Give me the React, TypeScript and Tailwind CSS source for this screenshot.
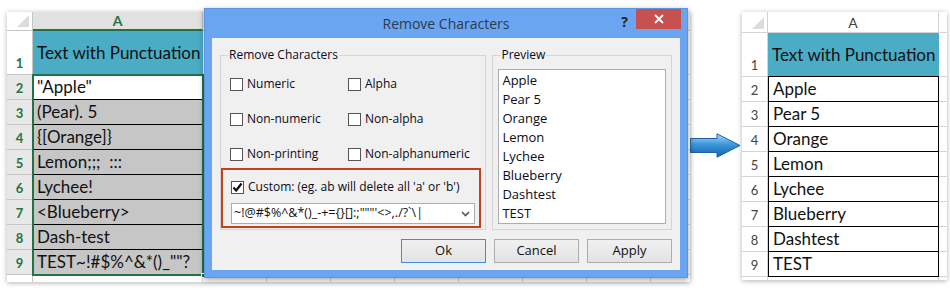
import React from 'react';

const leftRows = ['"Apple"', '(Pear). 5', '{[Orange]}', 'Lemon;;;  :::', 'Lychee!', '<Blueberry>', 'Dash-test', 'TEST~!#$%^&*()_""?'];
const cleanRows = ['Apple', 'Pear 5', 'Orange', 'Lemon', 'Lychee', 'Blueberry', 'Dashtest', 'TEST'];
const extraCols = [0, 1, 2, 3, 4, 5, 6];

function Corner() {
  return (
    <svg width="12" height="12" viewBox="0 0 12 12" className="absolute right-[3px] bottom-[3px]">
      <path d="M12 0 L12 12 L0 12 Z" fill="#dcdcdc" />
    </svg>
  );
}

function EmptyCells() {
  return (
    <>
      {extraCols.map((c) => (
        <div key={c} className="w-[64px] shrink-0 border-r border-b border-[#dadada]" />
      ))}
      <div className="flex-1 border-b border-[#dadada]" />
    </>
  );
}

function SourceSheet() {
  return (
    <div className="relative w-[683px] h-[270px] shrink-0 bg-white shadow-[0_1px_5px_rgba(0,0,0,0.3)] overflow-hidden font-['Lato',sans-serif]">
      <div className="flex h-[19px]">
        <div className="relative w-[26px] shrink-0 border-r border-b border-[#c6c6c6] bg-white">
          <Corner />
        </div>
        <div className="w-[170px] shrink-0 bg-[#e1e1e1] border-b-2 border-[#217346] border-r border-r-[#c6c6c6] flex items-center justify-center text-[14px] font-bold text-[#217346]">
          A
        </div>
        {extraCols.map((c) => (
          <div key={c} className="w-[64px] shrink-0 border-r border-b border-[#c6c6c6] bg-[#f3f3f3]" />
        ))}
        <div className="flex-1 border-b border-[#c6c6c6] bg-[#f3f3f3]" />
      </div>
      <div className="flex h-[44px]">
        <div className="w-[26px] shrink-0 border-r border-b border-[#c6c6c6] bg-white flex items-end justify-center pb-[1px] text-[13px] text-[#217346] font-bold">
          1
        </div>
        <div className="w-[170px] shrink-0 bg-[#4aacc5] border-b border-black flex items-center pl-[4px] text-[17px] text-[#111] whitespace-nowrap overflow-hidden">
          Text with Punctuation
        </div>
        <EmptyCells />
      </div>
      {leftRows.map((r, i) => (
        <div key={i} className="flex h-[25px]">
          <div className="w-[26px] shrink-0 border-r border-b border-[#c6c6c6] bg-[#e8e8e8] flex items-end justify-center pb-[1px] text-[13px] text-[#217346] font-bold">
            {i + 2}
          </div>
          <div
            className={`w-[170px] shrink-0 border-b border-r border-black flex items-center pl-[4px] text-[17px] text-[#111] whitespace-pre overflow-hidden ${
              i === 0 ? 'bg-white' : 'bg-[#c6c6c6]'
            }`}
          >
            {r}
          </div>
          <EmptyCells />
        </div>
      ))}
      <div className="flex h-[25px]">
        <div className="w-[26px] shrink-0 border-r border-[#c6c6c6] bg-white" />
        <div className="w-[170px] shrink-0 border-r border-[#dadada]" />
        {extraCols.map((c) => (
          <div key={c} className="w-[64px] shrink-0 border-r border-[#dadada]" />
        ))}
      </div>
      {/* selection outline A2:A9 */}
      <div className="absolute left-[25px] top-[62px] w-[172px] h-[202px] border-2 border-[#217346]" />
      <div className="absolute left-[194px] top-[261px] w-[5px] h-[5px] bg-[#217346] border border-white" />
    </div>
  );
}

function ResultSheet() {
  return (
    <div className="w-[205px] h-[268px] shrink-0 bg-white shadow-[0_1px_5px_rgba(0,0,0,0.3)] overflow-hidden font-['Lato',sans-serif]">
      <div className="flex h-[21px]">
        <div className="relative w-[26px] shrink-0 border-r border-b border-[#d4d4d4]">
          <Corner />
        </div>
        <div className="w-[171px] shrink-0 border-r border-b border-[#d4d4d4] flex items-center justify-center text-[14px] text-[#444]">
          A
        </div>
        <div className="flex-1 border-b border-[#d4d4d4]" />
      </div>
      <div className="flex h-[44px]">
        <div className="w-[26px] shrink-0 border-r border-b border-[#d4d4d4] flex items-end justify-center pb-[1px] text-[13px] text-[#444]">
          1
        </div>
        <div className="w-[171px] shrink-0 bg-[#4aacc5] border-b border-black flex items-center pl-[4px] text-[17px] text-[#111] whitespace-nowrap overflow-hidden">
          Text with Punctuation
        </div>
        <div className="flex-1 border-b border-[#d4d4d4]" />
      </div>
      {cleanRows.map((r, i) => (
        <div key={r} className="flex h-[25px]">
          <div className="w-[26px] shrink-0 border-r border-b border-[#d4d4d4] flex items-end justify-center pb-[1px] text-[13px] text-[#444]">
            {i + 2}
          </div>
          <div className="w-[171px] shrink-0 border-x border-b border-black flex items-center pl-[4px] text-[17px] text-[#111]">
            {r}
          </div>
          <div className="flex-1 border-b border-[#d4d4d4]" />
        </div>
      ))}
      <div className="flex h-[3px]">
        <div className="w-[26px] shrink-0 border-r border-[#d4d4d4]" />
        <div className="w-[171px] shrink-0 border-r border-[#d4d4d4]" />
      </div>
    </div>
  );
}

function Check({ checked }: { checked?: boolean }) {
  return (
    <div className="w-[13px] h-[13px] shrink-0 border border-[#555] bg-white flex items-center justify-center">
      {checked && (
        <svg width="11" height="11" viewBox="0 0 11 11">
          <path d="M1.5 5.5 L4.2 8.5 L9.5 1.5" fill="none" stroke="#111" strokeWidth="2.2" />
        </svg>
      )}
    </div>
  );
}

function Option({ label, checked }: { label: string; checked?: boolean }) {
  return (
    <div className="flex items-center gap-[4px] h-[20px]">
      <Check checked={checked} />
      <span className="text-[12px] text-[#0b0b20] whitespace-nowrap">{label}</span>
    </div>
  );
}

function Group({ title, className, children }: { title: string; className: string; children: React.ReactNode }) {
  return (
    <div className={`relative border border-[#d5d5d5] ${className}`}>
      <span className="absolute left-[7px] -top-[9px] bg-[#f0f0f0] px-[1px] text-[12px] leading-[16px] text-[#0b0b20]">{title}</span>
      {children}
    </div>
  );
}

function Button({ label, focus }: { label: string; focus?: boolean }) {
  return (
    <div
      className={`w-[85px] h-[24px] flex items-center justify-center text-[13px] text-[#111] bg-gradient-to-b from-[#f0f0f0] to-[#e3e3e3] border ${
        focus ? 'border-[#3c8ee0]' : 'border-[#adadad]'
      }`}
    >
      {label}
    </div>
  );
}

function Dialog() {
  return (
    <div className="absolute left-[204px] top-[8px] w-[484px] h-[270px] bg-[#6aa5f1] border border-[#5b95e2] flex flex-col px-[7px] pb-[7px] shadow-[0_2px_6px_rgba(0,0,0,0.35)] font-['Open_Sans',sans-serif]">
      <div className="h-[29px] grid grid-cols-[1fr_auto_1fr] items-start">
        <div />
        <div className="h-[29px] flex items-center text-[14px] text-[#2c3a4a]">Remove Characters</div>
        <div className="flex justify-end items-start gap-[8px] -mr-[1px]">
          <span className="mt-[2px] text-[14px] font-bold text-[#222]">?</span>
          <div className="w-[45px] h-[20px] bg-[#c75050] flex items-center justify-center">
            <svg width="10" height="10" viewBox="0 0 10 10">
              <path d="M1 1 L9 9 M9 1 L1 9" stroke="#fff" strokeWidth="1.8" />
            </svg>
          </div>
        </div>
      </div>
      <div className="flex-1 bg-[#f0f0f0] pt-[17px] pl-[8px] pr-[8px]">
        <div className="flex gap-[6px] h-[175px]">
          <Group title="Remove Characters" className="w-[267px]">
            <div className="pl-[9px] pt-[18px] grid grid-cols-[118px_auto] gap-y-[15px]">
              <Option label="Numeric" />
              <Option label="Alpha" />
              <Option label="Non-numeric" />
              <Option label="Non-alpha" />
              <Option label="Non-printing" />
              <Option label="Non-alphanumeric" />
            </div>
            <div className="mt-[4px] w-[260px] h-[60px] border-2 border-[#c2421c] pl-[8px] pt-[7px]">
              <Option label="Custom: (eg. ab will delete all 'a' or 'b')" checked />
              <div className="mt-[6px] w-[244px] h-[21px] bg-white border border-[#abadb3] flex items-center pl-[2px] pr-[4px]">
                <span className="flex-1 min-w-0 overflow-hidden text-[12.5px] text-[#111] whitespace-pre">{'~!@#$%^&*()_-+={}[]:;"""\'<>,./?`\\|'}</span>
                <svg width="9" height="6" viewBox="0 0 9 6" className="shrink-0 ml-[4px]">
                  <path d="M1 1 L4.5 4.5 L8 1" fill="none" stroke="#555" strokeWidth="1.6" />
                </svg>
              </div>
            </div>
          </Group>
          <Group title="Preview" className="w-[180px]">
            <div className="ml-[5px] mt-[13px] w-[168px] h-[155px] bg-white border border-[#abadb3] pl-[3px] pt-[1px]">
              {cleanRows.map((r) => (
                <div key={r} className="h-[19px] flex items-center text-[13px] text-[#0b0b20]">
                  {r}
                </div>
              ))}
            </div>
          </Group>
        </div>
        <div className="mt-[9px] flex justify-end gap-[8px]">
          <Button label="Ok" focus />
          <Button label="Cancel" />
          <Button label="Apply" />
        </div>
      </div>
    </div>
  );
}

function Arrow() {
  return (
    <svg width="52" height="25" viewBox="0 0 52 25">
      <defs>
        <linearGradient id="arrowFill" x1="0" y1="0" x2="0" y2="1">
          <stop offset="0" stopColor="#a9dcf7" />
          <stop offset="0.45" stopColor="#3d97da" />
          <stop offset="1" stopColor="#1560ad" />
        </linearGradient>
      </defs>
      <path d="M1.5 5.5 H28 V0.8 L51 12.5 L28 24.2 V19.5 H1.5 Q0.5 12.5 1.5 5.5 Z" fill="url(#arrowFill)" stroke="#1d62a6" strokeWidth="1" />
    </svg>
  );
}

export default function App() {
  return (
    <div className="relative w-[950px] h-[290px] bg-white overflow-hidden flex items-start pt-[12px] pl-[7px]">
      <SourceSheet />
      <div className="w-[53px] shrink-0 pt-[121px] -ml-[1px] pr-[1px]">
        <Arrow />
      </div>
      <ResultSheet />
      <Dialog />
    </div>
  );
}
